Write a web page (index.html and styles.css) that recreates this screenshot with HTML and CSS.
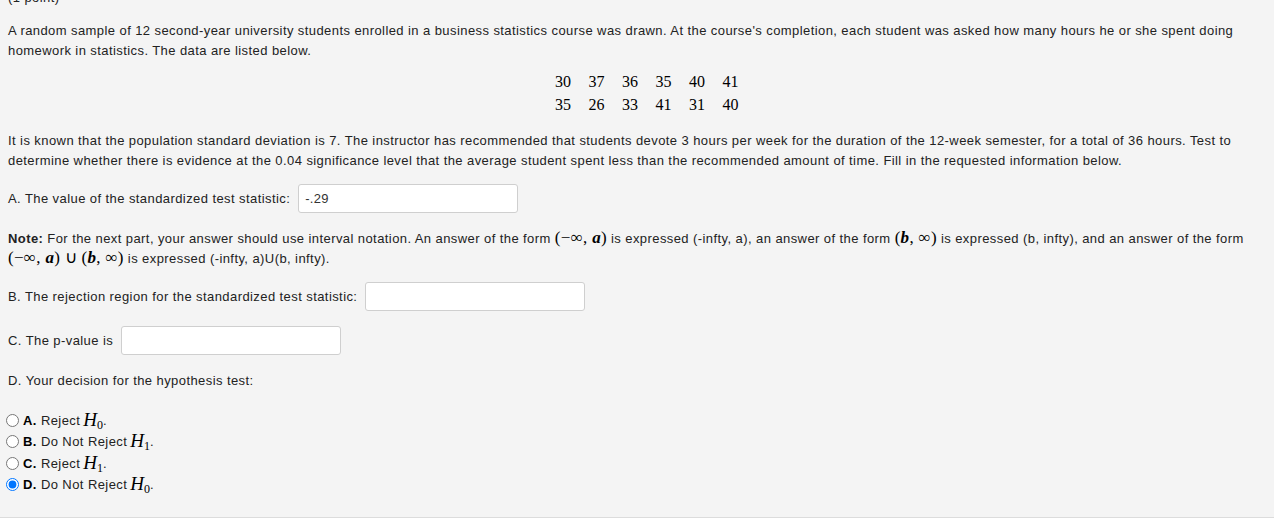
FILE: index.html
```html
<!DOCTYPE html>
<html>
<head>
<meta charset="utf-8">
<link rel="stylesheet" href="styles.css">
</head>
<body>
<div class="page">
  <div class="points">(1 point)</div>
  <p class="para">A random sample of 12 second-year university students enrolled in a business statistics course was drawn. At the course's completion, each student was asked how many hours he or she spent doing homework in statistics. The data are listed below.</p>
  <div class="data">
    <div class="row"><span>30</span><span>37</span><span>36</span><span>35</span><span>40</span><span>41</span></div>
    <div class="row"><span>35</span><span>26</span><span>33</span><span>41</span><span>31</span><span>40</span></div>
  </div>
  <p class="para p2">It is known that the population standard deviation is 7. The instructor has recommended that students devote 3 hours per week for the duration of the 12-week semester, for a total of 36 hours. Test to determine whether there is evidence at the 0.04 significance level that the average student spent less than the recommended amount of time. Fill in the requested information below.</p>
  <div class="field fa"><span>A. The value of the standardized test statistic:</span><input class="box" type="text" value="-.29"></div>
  <p class="para note"><b>Note:</b> For the next part, your answer should use interval notation. An answer of the form <span class="m">(−∞, <i>a</i>)</span> is expressed (-infty, a), an answer of the form <span class="m">(<i>b</i>, ∞)</span> is expressed (b, infty), and an answer of the form <span class="m">(−∞, <i>a</i>) ∪ (<i>b</i>, ∞)</span> is expressed (-infty, a)U(b, infty).</p>
  <div class="field fb"><span>B. The rejection region for the standardized test statistic:</span><input class="box" type="text"></div>
  <div class="field fc"><span>C. The p-value is</span><input class="box" type="text"></div>
  <div class="decision">D. Your decision for the hypothesis test:</div>
  <div class="options">
    <label class="opt"><input type="radio" name="d"><b>A.</b>&nbsp;Reject <span class="h">H<sub>0</sub></span>.</label>
    <label class="opt"><input type="radio" name="d"><b>B.</b>&nbsp;Do Not Reject <span class="h">H<sub>1</sub></span>.</label>
    <label class="opt"><input type="radio" name="d"><b>C.</b>&nbsp;Reject <span class="h">H<sub>1</sub></span>.</label>
    <label class="opt"><input type="radio" name="d" checked><b>D.</b>&nbsp;Do Not Reject <span class="h">H<sub>0</sub></span>.</label>
  </div>
</div>
</body>
</html>
```

FILE: styles.css
```css
html, body {
  margin: 0;
  padding: 0;
  background: #ffffff;
}
body {
  font-family: "Liberation Sans", Arial, sans-serif;
  font-size: 13px;
  letter-spacing: 0.42px;
  color: #222;
}
.page {
  background: #f4f4f4;
  border-bottom: 1px solid #dcdcdc;
  padding: 0 8px;
  height: 517px;
  overflow: hidden;
}
.points {
  line-height: 20px;
  margin-top: -12px;
  margin-bottom: 13px;
}
.para {
  margin: 0;
  line-height: 20px;
}
.data {
  display: flex;
  flex-direction: column;
  align-items: center;
  margin: 9px 0 0 0;
  padding-left: 37px;
  font-family: "Liberation Serif", "Times New Roman", serif;
  font-size: 16px;
  letter-spacing: 0;
  color: #000;
}
.row {
  display: flex;
  line-height: 23px;
}
.row span {
  width: 33.5px;
  text-align: left;
}
.p2 {
  margin-top: 15px;
}
.field {
  display: flex;
  align-items: center;
  gap: 8px;
}
.box {
  width: 220px;
  height: 29px;
  box-sizing: border-box;
  border: 1px solid #cfcfcf;
  border-radius: 3px;
  background: #fff;
  padding: 0 6px;
  font-family: "Liberation Sans", Arial, sans-serif;
  font-size: 13px;
  letter-spacing: 0.3px;
  color: #333;
  margin: 0;
}
.fa { margin-top: 13px; }
.note { margin-top: 16px; }
.fb { margin-top: 13px; }
.fc { margin-top: 15px; }
.m {
  font-family: "Liberation Serif", "Times New Roman", serif;
  font-size: 17px;
  letter-spacing: 0.3px;
  line-height: 1;
  color: #000;
}
.m i { font-weight: bold; }
.decision {
  margin-top: 16px;
  line-height: 20px;
}
.options {
  margin-top: 19px;
  display: flex;
  flex-direction: column;
}
.opt {
  display: flex;
  align-items: center;
  height: 21.3px;
  color: #222;
}
.opt input {
  margin: 0 4px 0 -2px;
  width: 13px;
  height: 13px;
}
.opt b { color: #000; }
.h {
  font-family: "Liberation Serif", "Times New Roman", serif;
  font-style: italic;
  font-size: 19px;
  letter-spacing: 0;
  line-height: 1;
  color: #000;
  margin-left: 3px;
}
.h sub {
  font-style: normal;
  font-size: 12px;
  vertical-align: -3px;
}
```
